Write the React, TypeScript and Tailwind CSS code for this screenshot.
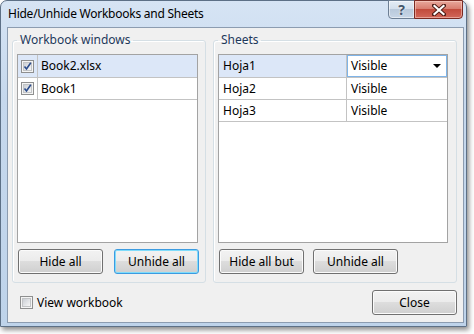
import { ReactNode } from "react";

const font = "font-['Noto_Sans',sans-serif]";

function WinButton({ children, focused, className }: { children: ReactNode; focused?: boolean; className?: string }) {
  return (
    <button
      className={`h-[25px] w-[85px] rounded-[3px] border text-[12px] leading-none text-black bg-[linear-gradient(#f2f2f2_0%,#ebebeb_50%,#dddddd_50%,#cfcfcf_100%)] ${
        focused
          ? "border-[#3c9be0] shadow-[inset_0_0_0_1px_#7fdcfb]"
          : "border-[#707070] shadow-[inset_0_0_0_1px_#fbfbfb]"
      } ${className ?? ""}`}
    >
      {children}
    </button>
  );
}

function Check({ checked }: { checked?: boolean }) {
  return (
    <span className="flex h-[13px] w-[13px] items-center justify-center border border-[#8e8f8f] bg-[#f4f4f4]">
      <span className="flex h-[9px] w-[9px] items-center justify-center border border-[#c2c4c6] bg-[linear-gradient(135deg,#cbcfd5,#f6f6f6)]">
        {checked && (
          <svg width="9" height="9" viewBox="0 0 9 9" className="overflow-visible">
            <path d="M1.5 4.5 L3.5 7 L7.8 0.8" fill="none" stroke="#2b4c8c" strokeWidth="1.6" />
          </svg>
        )}
      </span>
    </span>
  );
}

function Group({ title, children, className }: { title: string; children: ReactNode; className?: string }) {
  return (
    <fieldset
      className={`h-[251px] rounded-[3px] border border-[#d5dfe5] pl-[4px] pt-[6px] shadow-[inset_1px_1px_0_#ffffff] ${className ?? ""}`}
    >
      <legend className="pl-[3px] pr-[2px] text-[12px] leading-[16px] text-[#1e395b]">{title}</legend>
      {children}
    </fieldset>
  );
}

const workbooks = [
  { name: "Book2.xlsx", selected: true },
  { name: "Book1", selected: false },
];

const sheets = ["Hoja1", "Hoja2", "Hoja3"];

export default function App() {
  return (
    <div className={`h-[334px] w-[474px] overflow-hidden bg-white ${font}`}>
      <div className="flex h-[327px] w-[467px] flex-col rounded-t-[7px] border border-[#5d7086] bg-[linear-gradient(180deg,#d6e4f4_0%,#c6d8ed_30%,#bed3ea_100%)] shadow-[2px_3px_5px_rgba(0,0,0,0.45)]">
        {/* title bar */}
        <div className="flex h-[26px] items-start justify-between pl-[7px] pr-[3px]">
          <span className="pt-[5px] text-[12px] leading-[16px] tracking-[-0.25px] text-black">
            Hide/Unhide Workbooks and Sheets
          </span>
          <div className="-mt-[1px] flex">
            <div className="flex h-[19px] w-[27px] items-center justify-center rounded-bl-[4px] border border-[#6d7f94] bg-[linear-gradient(#e4ecf5_0%,#d2deeb_50%,#b9c9db_50%,#c7d6e6_100%)] shadow-[inset_0_0_0_1px_rgba(255,255,255,0.5)]">
              <span className="text-[14px] font-bold leading-none text-[#44566b] [text-shadow:0_0_2px_#fff]">?</span>
            </div>
            <div className="-ml-[1px] flex h-[19px] w-[49px] items-center justify-center rounded-br-[4px] border border-[#7a2a22] bg-[linear-gradient(#e8a89c_0%,#d7796b_50%,#c24b3c_50%,#d2675a_100%)] shadow-[inset_0_0_0_1px_rgba(255,220,210,0.5)]">
              <svg width="14" height="12" viewBox="0 0 14 12">
                <path d="M2 1.5 L12 10.5 M12 1.5 L2 10.5" stroke="#4a1a14" strokeWidth="4" strokeLinecap="square" />
                <path d="M2.5 2 L11.5 10 M11.5 2 L2.5 10" stroke="#ffffff" strokeWidth="2.2" strokeLinecap="square" />
              </svg>
            </div>
          </div>
        </div>

        {/* client area */}
        <div className="ml-[6px] mr-[2px] flex h-[296px] flex-col border border-[#8c9cb0] bg-[#f0f0f0] pl-[4px] pr-[6px] pt-[4px]">
          <div className="flex gap-[7px]">
            <Group title="Workbook windows" className="w-[194px]">
              <div className="h-[189px] w-[181px] border border-[#a3a3a3] bg-white">
                {workbooks.map((wb, i) => (
                  <div
                    key={wb.name}
                    className={`flex border-b border-[#c3c3c3] ${i === 0 ? "h-[23px]" : "h-[22px]"} ${
                      wb.selected ? "bg-[#dce7f8]" : "bg-white"
                    }`}
                  >
                    <div className="flex w-[20px] items-center justify-center border-r border-[#c3c3c3]">
                      <Check checked />
                    </div>
                    <div className="flex items-center pl-[3px] text-[12px] text-black">{wb.name}</div>
                  </div>
                ))}
              </div>
              <div className="mt-[6px] flex gap-[11px] pl-[1px]">
                <WinButton>Hide all</WinButton>
                <WinButton focused>Unhide all</WinButton>
              </div>
            </Group>

            <Group title="Sheets" className="w-[244px]">
              <div className="h-[189px] w-[230px] border border-[#a3a3a3] bg-white">
                {sheets.map((s, i) => (
                  <div key={s} className={`flex border-b border-[#c3c3c3] ${i === 0 ? "h-[23px]" : "h-[22px]"}`}>
                    <div
                      className={`flex w-[128px] items-center border-r border-[#c3c3c3] pl-[4px] text-[12px] text-black ${
                        i === 0 ? "bg-[#dce7f8]" : ""
                      }`}
                    >
                      {s}
                    </div>
                    {i === 0 ? (
                      <div className="flex flex-1 items-center justify-between border border-[#7fb4e8] pl-[3px] pr-[5px] text-[12px] text-black">
                        <span>Visible</span>
                        <svg width="8" height="4" viewBox="0 0 8 4">
                          <path d="M0 0 H8 L4 4 Z" fill="#000" />
                        </svg>
                      </div>
                    ) : (
                      <div className="flex flex-1 items-center pl-[4px] text-[12px] text-black">Visible</div>
                    )}
                  </div>
                ))}
              </div>
              <div className="mt-[6px] flex gap-[9px] pl-[1px]">
                <WinButton>Hide all but</WinButton>
                <WinButton>Unhide all</WinButton>
              </div>
            </Group>
          </div>

          <div className="mt-[7px] flex items-center justify-between pl-[8px]">
            <label className="flex items-center gap-[4px] text-[12px] text-black">
              <Check />
              <span>View workbook</span>
            </label>
            <WinButton>Close</WinButton>
          </div>
        </div>
      </div>
    </div>
  );
}
